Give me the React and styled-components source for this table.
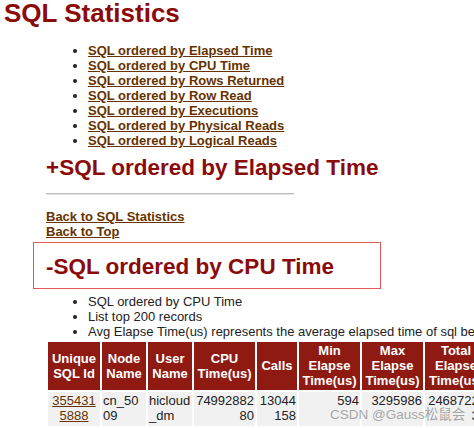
import styled, { createGlobalStyle } from "styled-components";

const GlobalStyle = createGlobalStyle`
  html, body {
    margin: 0;
    padding: 0;
    background: #fff;
    overflow: hidden;
  }
  body {
    font-family: "Liberation Sans", Arial, sans-serif;
  }
`;

const Page = styled.div`
  position: relative;
  width: 900px;
  padding-left: 4px;
  color: #222;
`;

const Title = styled.h1`
  margin: 0;
  font-size: 26px;
  line-height: 26px;
  font-weight: bold;
  color: #8b0a0a;
`;

const Section = styled.div`
  margin-left: 42px;
`;

const BulletList = styled.ul`
  margin: ${(p) => p.$top}px 0 0 0;
  padding-left: 42px;
  list-style: disc;
  font-size: 13px;
  line-height: 15px;
  font-weight: ${(p) => (p.$bold ? "bold" : "normal")};
  white-space: nowrap;
`;

const Link = styled.a`
  color: #663300;
  text-decoration: underline;
  font-weight: ${(p) => (p.$plain ? "normal" : "bold")};
`;

const Heading = styled.h2`
  margin: ${(p) => p.$top}px 0 0 0;
  font-size: 22.5px;
  line-height: 26px;
  font-weight: bold;
  color: #8b0a0a;
`;

const Rule = styled.div`
  width: 248px;
  margin-top: 12px;
  border-top: 1px solid #bdbdbd;
  height: 1px;
  background: #e4e4e4;
`;

const BackLinks = styled.div`
  margin-top: 14px;
  display: flex;
  flex-direction: column;
  font-size: 13px;
  line-height: 15px;
`;

const HeadingWrap = styled.div`
  position: relative;
  margin-top: 15px;
`;

const Highlight = styled.div`
  position: absolute;
  left: -13px;
  top: -12px;
  width: 346px;
  height: 45px;
  border: 1px solid #e35a5a;
  pointer-events: none;
`;

const Table = styled.table`
  margin: 1px 0 0 0;
  border-collapse: separate;
  border-spacing: 2px;
  table-layout: fixed;
  font-size: 13px;
  line-height: 15px;
`;

const Th = styled.th`
  box-sizing: border-box;
  background: #8e1a12;
  color: #fff;
  font-weight: bold;
  text-align: center;
  vertical-align: middle;
  padding: 1px 1px 2px;
`;

const Td = styled.td`
  box-sizing: border-box;
  background: #f1f1f1;
  color: #222;
  text-align: ${(p) => p.$align || "left"};
  vertical-align: top;
  word-break: break-all;
  padding: 1px 1px 3px;
`;

const Watermark = styled.div`
  position: absolute;
  left: 330px;
  top: 406px;
  font-family: "Liberation Sans", "Noto Sans CJK SC", sans-serif;
  font-size: 13.5px;
  line-height: 18px;
  color: rgba(140, 140, 140, 0.75);
  white-space: nowrap;
  pointer-events: none;
`;

const menu = [
  "SQL ordered by Elapsed Time",
  "SQL ordered by CPU Time",
  "SQL ordered by Rows Returned",
  "SQL ordered by Row Read",
  "SQL ordered by Executions",
  "SQL ordered by Physical Reads",
  "SQL ordered by Logical Reads",
];

const columns = [
  { label: "Unique SQL Id", width: 52 },
  { label: "Node Name", width: 44 },
  { label: "User Name", width: 44 },
  { label: "CPU Time(us)", width: 61 },
  { label: "Calls", width: 40 },
  { label: "Min Elapse Time(us)", width: 61 },
  { label: "Max Elapse Time(us)", width: 61 },
  { label: "Total Elapse Time(us)", width: 62 },
];

export default function App() {
  return (
    <Page>
      <GlobalStyle />
      <Title>SQL Statistics</Title>
      <Section>
        <BulletList $top={17} $bold>
          {menu.map((m) => (
            <li key={m}>
              <Link href="#">{m}</Link>
            </li>
          ))}
        </BulletList>
        <Heading $top={7}>+SQL ordered by Elapsed Time</Heading>
        <Rule />
        <BackLinks>
          <Link href="#">Back to SQL Statistics</Link>
          <Link href="#">Back to Top</Link>
        </BackLinks>
        <HeadingWrap>
          <Heading $top={0}>-SQL ordered by CPU Time</Heading>
          <Highlight />
        </HeadingWrap>
        <BulletList $top={14}>
          <li>SQL ordered by CPU Time</li>
          <li>List top 200 records</li>
          <li>
            Avg Elapse Time(us) represents the average elapsed time of sql
            between two snapshots
          </li>
        </BulletList>
        <Table>
          <thead>
            <tr>
              {columns.map((c) => (
                <Th key={c.label} style={{ width: c.width }}>
                  {c.label}
                </Th>
              ))}
            </tr>
          </thead>
          <tbody>
            <tr>
              <Td $align="center">
                <Link href="#" $plain>
                  3554315888
                </Link>
              </Td>
              <Td>cn_5009</Td>
              <Td>hicloud_dm</Td>
              <Td $align="right">7499288280</Td>
              <Td $align="right">13044158</Td>
              <Td $align="right">594</Td>
              <Td $align="right">3295986</Td>
              <Td $align="right">2468722335</Td>
            </tr>
          </tbody>
        </Table>
      </Section>
      <Watermark>CSDN @Gauss松鼠会</Watermark>
    </Page>
  );
}
